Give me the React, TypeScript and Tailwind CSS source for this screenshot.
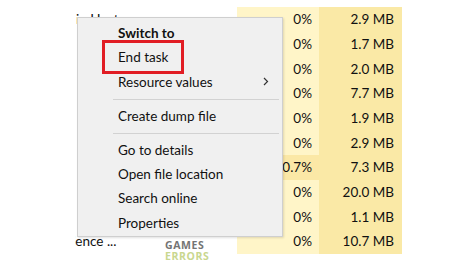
const rows = [
  { cpu: "0%", mem: "2.9 MB", name: "in Host" },
  { cpu: "0%", mem: "1.7 MB", name: "" },
  { cpu: "0%", mem: "2.0 MB", name: "" },
  { cpu: "0%", mem: "7.7 MB", name: "" },
  { cpu: "0%", mem: "1.9 MB", name: "" },
  { cpu: "0%", mem: "2.9 MB", name: "" },
  { cpu: "0.7%", mem: "7.3 MB", name: "", hot: true },
  { cpu: "0%", mem: "20.0 MB", name: "" },
  { cpu: "0%", mem: "1.1 MB", name: "" },
  { cpu: "0%", mem: "10.7 MB", name: "Experience ..." },
];

const font = { fontFamily: "Lato, 'Noto Sans', sans-serif" };

const MenuItem = ({ label, bold, arrow }: { label: string; bold?: boolean; arrow?: boolean }) => (
  <div className="h-[24.4px] flex items-center pl-[40px] pr-[13px] text-[13.5px] text-[#111]">
    <span className={bold ? "font-bold" : ""}>{label}</span>
    {arrow && (
      <svg className="ml-auto" width="6" height="9" viewBox="0 0 6 9">
        <path d="M1 1l3.5 3.5L1 8" fill="none" stroke="#333" strokeWidth="1.2" />
      </svg>
    )}
  </div>
);

const Separator = ({ h }: { h: string }) => (
  <div className={`${h} flex items-center pl-[35px] pr-[3px]`}>
    <div className="h-px w-full bg-[#d2d2d2]" />
  </div>
);

export default function App() {
  return (
    <div className="relative w-[474px] h-[263px] bg-white overflow-hidden" style={font}>
      <div className="flex pl-[75px] pt-[7px]">
        <div className="w-[162px] overflow-hidden text-[13.5px] text-[#111]">
          {rows.map((r, i) => (
            <div key={i} className="h-[24.7px] flex items-center whitespace-nowrap">
              <span className={i === 9 ? "-ml-[37px]" : "ml-[1px]"}>{r.name}</span>
            </div>
          ))}
        </div>
        <div className="w-[82px] bg-[#fff5c8] text-[13.5px] text-[#111]">
          {rows.map((r, i) => (
            <div
              key={i}
              className={`h-[24.7px] flex items-center justify-end pr-[7px] ${r.hot ? "bg-[#fbe8a6]" : ""}`}
            >
              {r.cpu}
            </div>
          ))}
        </div>
        <div className="w-[83px] bg-[#fae9a6] text-[13.5px] text-[#111]">
          {rows.map((r, i) => (
            <div key={i} className="h-[24.7px] flex items-center justify-end pr-[8px]">
              {r.mem}
            </div>
          ))}
        </div>
      </div>

      <div className="absolute left-[77px] top-[17px] w-[206px] h-[220px] bg-[#f0f0f0] border border-[#cfcfcf] shadow-[1px_1px_2px_rgba(0,0,0,0.12)] pt-[3px]">
        <MenuItem label="Switch to" bold />
        <MenuItem label="End task" />
        <MenuItem label="Resource values" arrow />
        <Separator h="h-[10px]" />
        <MenuItem label="Create dump file" />
        <Separator h="h-[9px]" />
        <MenuItem label="Go to details" />
        <MenuItem label="Open file location" />
        <MenuItem label="Search online" />
        <MenuItem label="Properties" />
        <div className="absolute left-[24px] top-[22px] w-[82px] h-[34px] border-[3px] border-[#e11d24]" />
      </div>

      <div
        className="absolute left-[165px] top-[240px] flex flex-col items-start leading-[10.5px] font-bold text-[10.5px] tracking-[0.6px]"
        style={{ fontFamily: "'Open Sans', sans-serif" }}
      >
        <span className="text-[#747474]">GAMES</span>
        <span className="text-[#c9d78f]">ERRORS</span>
      </div>
    </div>
  );
}
